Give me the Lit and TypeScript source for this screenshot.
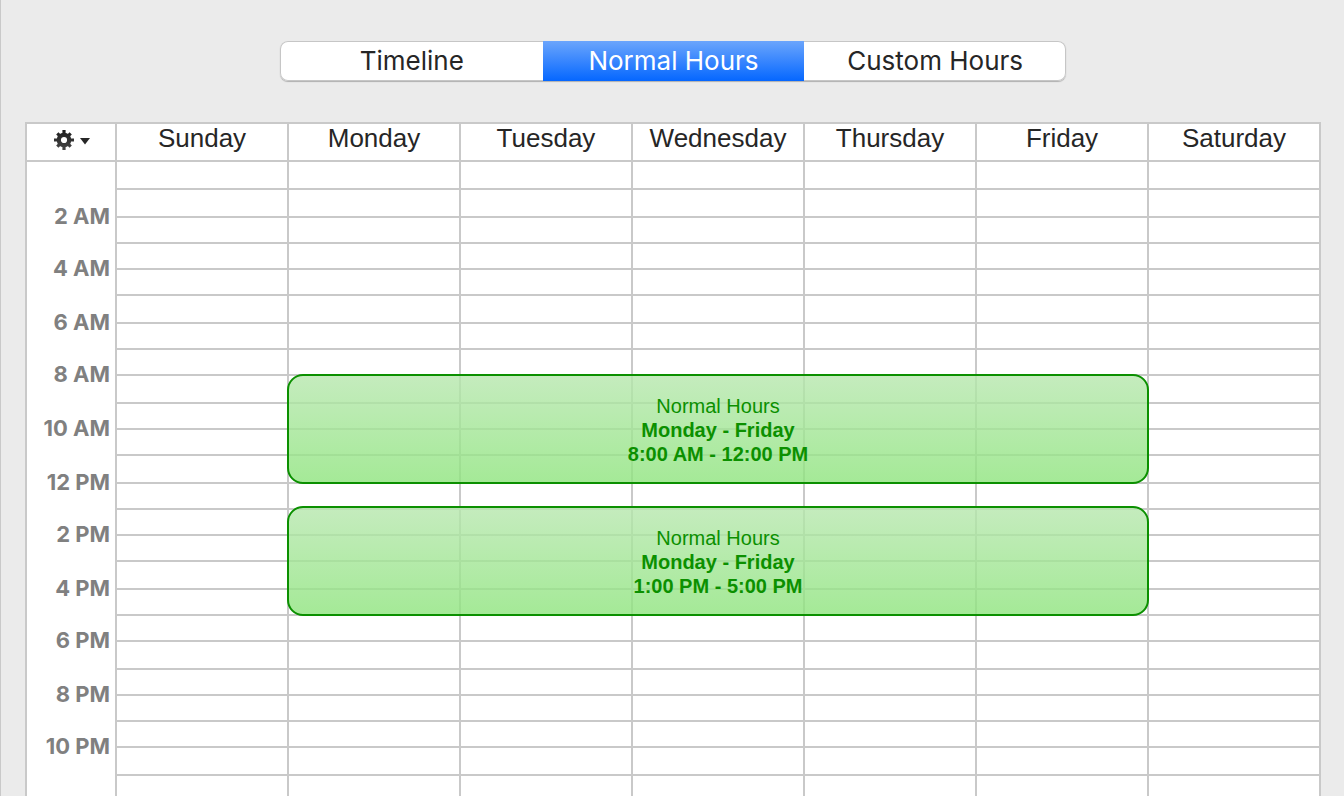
import { LitElement, html, css } from "lit";
import { customElement, state } from "lit/decorators.js";
import { classMap } from "lit/directives/class-map.js";
import { styleMap } from "lit/directives/style-map.js";

interface HoursBlock {
  title: string;
  days: string;
  time: string;
  firstDay: number;
  lastDay: number;
  startHour: number;
  endHour: number;
}

const DAYS = ["Sunday", "Monday", "Tuesday", "Wednesday", "Thursday", "Friday", "Saturday"];
const TABS = ["Timeline", "Normal Hours", "Custom Hours"];

// Hours whose row takes the extra pixels, so that lines stay on even pixels.
const TALL_HOURS = new Set([0, 1, 5, 8, 11, 15, 18, 22]);
const HOURS = Array.from({ length: 24 }, (_, hour) => hour);

const BLOCKS: HoursBlock[] = [
  { title: "Normal Hours", days: "Monday - Friday", time: "8:00 AM - 12:00 PM", firstDay: 1, lastDay: 5, startHour: 8, endHour: 12 },
  { title: "Normal Hours", days: "Monday - Friday", time: "1:00 PM - 5:00 PM", firstDay: 1, lastDay: 5, startHour: 13, endHour: 17 },
];

function hourLabel(hour: number): string {
  if (hour % 2 !== 0 || hour >= 24) return "";
  return `${hour > 12 ? hour - 12 : hour} ${hour < 12 ? "AM" : "PM"}`;
}

@customElement("segmented-tabs")
export class SegmentedTabs extends LitElement {
  @state() private selected = 1;

  static styles = css`
    :host {
      display: block;
    }
    .tabs {
      display: grid;
      grid-template-columns: repeat(3, 1fr);
      height: 40px;
      padding-left: 1px;
      border-radius: 8px;
      background: #fff;
      box-shadow: inset 0 0 0 1px #c6c6c6, 0 1px 1px #b0b0b0;
    }
    .tab {
      margin: 0;
      padding: 0;
      border: 0;
      background: none;
      color: #262626;
      font: 26px/40px Inter, "Liberation Sans", sans-serif;
    }
    .active {
      color: #fff;
      background: linear-gradient(#6ba5fc, #0567ff);
    }
  `;

  render() {
    return html`
      <div class="tabs" role="tablist">
        ${TABS.map(
          (name, i) => html`<button
            type="button"
            role="tab"
            aria-selected=${i === this.selected ? "true" : "false"}
            class=${classMap({ tab: true, active: i === this.selected })}
            @click=${() => (this.selected = i)}
          >${name}</button>`
        )}
      </div>
    `;
  }
}

@customElement("week-schedule")
export class WeekSchedule extends LitElement {
  static styles = css`
    :host {
      display: block;
      position: relative;
      border: 2px solid #c9c9c9;
      border-right: 0;
      background: #fff;
      font-family: "Liberation Sans", Arial, sans-serif;
    }
    .table {
      width: 100%;
      table-layout: fixed;
      border-spacing: 0;
    }
    .axis {
      width: 90px;
    }
    th,
    td {
      box-sizing: border-box;
      padding: 0;
      border-right: 2px solid #c9c9c9;
      border-bottom: 2px solid #c9c9c9;
    }
    .head {
      height: 38px;
    }
    .corner,
    .day {
      vertical-align: top;
    }
    .day {
      color: #262626;
      font-size: 26px;
      line-height: 28px;
      font-weight: 400;
    }
    .short {
      height: 26px;
    }
    .tall {
      height: 28px;
    }
    .hour {
      padding-right: 5px;
      border-bottom: 0;
      vertical-align: bottom;
      text-align: right;
      white-space: nowrap;
      color: #808080;
      font: 700 22px/4px Inter, "Liberation Sans", sans-serif;
    }
    .options {
      display: flex;
      align-items: center;
      justify-content: center;
      width: 100%;
      height: 32px;
      margin: 0;
      padding: 0 0 0 2px;
      border: 0;
      background: none;
    }
    .icon {
      display: block;
    }
    .blocks {
      position: absolute;
      inset: 38px 0 0 90px;
      display: grid;
      grid-template-columns: repeat(7, 1fr);
    }
    .block {
      box-sizing: border-box;
      align-self: end;
      margin-left: -2px;
      padding: 18px 0 16px;
      border: 2px solid #0b9000;
      border-radius: 16px;
      background: linear-gradient(rgba(182, 231, 173, 0.8), rgba(142, 228, 125, 0.8));
      color: #0b9000;
      text-align: center;
      font-size: 20px;
      line-height: 24px;
    }
    .strong {
      font-weight: 700;
    }
  `;

  render() {
    const rows = HOURS.map((h) => (TALL_HOURS.has(h) ? "28px" : "26px")).join(" ");
    return html`
      <table class="table">
        <colgroup>
          <col class="axis" />
          ${DAYS.map(() => html`<col />`)}
        </colgroup>
        <thead>
          <tr class="head">
            <td class="corner">
              <button class="options" type="button" aria-label="Options">
                <svg class="icon" width="38" height="22" viewBox="0 0 38 22">
                  <defs>
                    <linearGradient id="g" gradientUnits="userSpaceOnUse" x1="0" y1="1" x2="0" y2="21">
                      <stop offset="0" stop-color="#1c1c1c" />
                      <stop offset="1" stop-color="#484848" />
                    </linearGradient>
                  </defs>
                  <g fill="none" stroke="url(#g)">
                    <circle cx="11" cy="11" r="5.2" stroke-width="4.2" />
                    <path
                      stroke-width="3.2"
                      d="M11.01 1L11 6M11.01 21L11 16M1 11.01L6 11M21 11.01L16 11M4.300 4.300l3 3M17.700 17.700l-3-3M17.700 4.300l-3 3M4.300 17.700l3-3"
                    />
                  </g>
                  <path fill="#262626" d="M27 9h10l-5 6.500z" />
                </svg>
              </button>
            </td>
            ${DAYS.map((day) => html`<th class="day" scope="col">${day}</th>`)}
          </tr>
        </thead>
        <tbody>
          ${HOURS.map(
            (hour) => html`<tr class=${TALL_HOURS.has(hour) ? "tall" : "short"}>
              <th class="hour" scope="row">${hourLabel(hour + 1)}</th>
              ${DAYS.map(() => html`<td></td>`)}
            </tr>`
          )}
        </tbody>
      </table>
      <div class="blocks" style=${styleMap({ gridTemplateRows: rows })}>
        ${BLOCKS.map(
          (b) => html`<div
            class="block"
            style=${styleMap({
              gridColumn: `${b.firstDay + 1} / ${b.lastDay + 2}`,
              gridRow: `${b.startHour + 1} / ${b.endHour + 1}`,
            })}
          >
            <div>${b.title}</div>
            <div class="strong">${b.days}</div>
            <div class="strong">${b.time}</div>
          </div>`
        )}
      </div>
    `;
  }
}

@customElement("app-root")
export class AppRoot extends LitElement {
  static styles = css`
    :host {
      display: block;
      box-sizing: border-box;
      height: 100vh;
      overflow: hidden;
      padding: 41px 23px 0 24px;
      border-left: 1px solid #c9c9c9;
      background: #ebebeb;
    }
    .switcher {
      max-width: 786px;
      margin: 0 auto 41px;
    }
  `;

  render() {
    return html`
      <segmented-tabs class="switcher"></segmented-tabs>
      <week-schedule></week-schedule>
    `;
  }
}
